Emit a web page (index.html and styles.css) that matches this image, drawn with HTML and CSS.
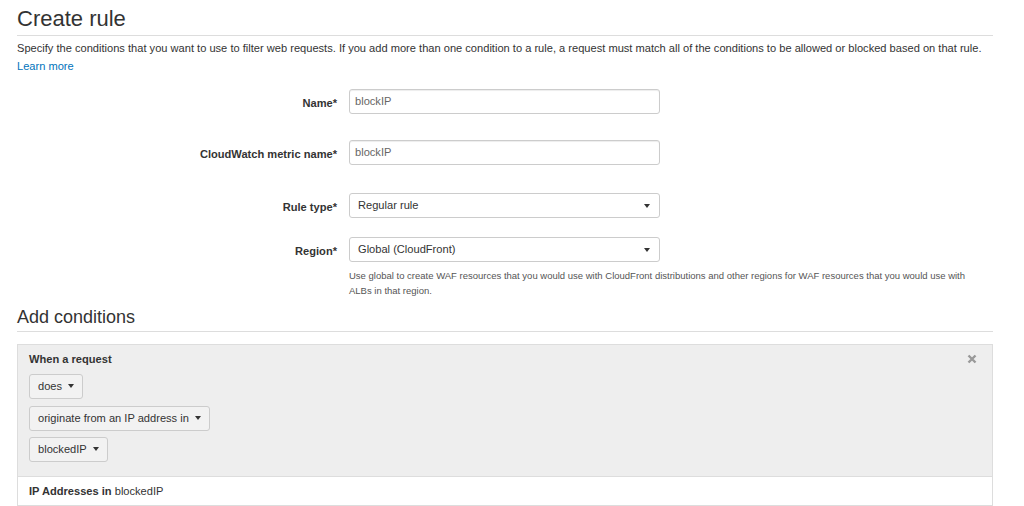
FILE: index.html
```html
<!DOCTYPE html>
<html>
<head>
<meta charset="utf-8">
<link rel="stylesheet" href="styles.css">
</head>
<body>
<div class="page">
  <h1 class="title">Create rule</h1>
  <p class="desc">Specify the conditions that you want to use to filter web requests. If you add more than one condition to a rule, a request must match all of the conditions to be allowed or blocked based on that rule.<br><a class="link" href="#">Learn more</a></p>

  <div class="form">
    <div class="row row-name">
      <label class="lbl">Name*</label>
      <div class="ctl"><div class="input">blockIP</div></div>
    </div>
    <div class="row row-cw">
      <label class="lbl">CloudWatch metric name*</label>
      <div class="ctl"><div class="input">blockIP</div></div>
    </div>
    <div class="row row-type">
      <label class="lbl">Rule type*</label>
      <div class="ctl"><div class="select">Regular rule<span class="caret"></span></div></div>
    </div>
    <div class="row row-region">
      <label class="lbl">Region*</label>
      <div class="ctl">
        <div class="select">Global (CloudFront)<span class="caret"></span></div>
        <p class="help">Use global to create WAF resources that you would use with CloudFront distributions and other regions for WAF resources that you would use with ALBs in that region.</p>
      </div>
    </div>
  </div>

  <h2 class="subtitle">Add conditions</h2>

  <div class="panel">
    <div class="panel-body">
      <div class="panel-head">
        <span class="when">When a request</span>
        <svg class="close" width="10" height="10" viewBox="0 0 10 10"><path d="M1.5 1.5 L8.5 8.5 M8.5 1.5 L1.5 8.5" stroke="#999" stroke-width="2.4" stroke-linecap="butt"/></svg>
      </div>
      <div class="btnrow"><span class="btn">does<span class="caret sm"></span></span></div>
      <div class="btnrow"><span class="btn">originate from an IP address in<span class="caret sm"></span></span></div>
      <div class="btnrow"><span class="btn">blockedIP<span class="caret sm"></span></span></div>
    </div>
    <div class="panel-foot"><b>IP Addresses in</b> blockedIP</div>
  </div>
</div>
</body>
</html>
```
FILE: styles.css
```css
* { box-sizing: border-box; }
html, body { margin: 0; padding: 0; background: #fff; }
body {
  font-family: "Liberation Sans", Arial, sans-serif;
  font-size: 11.1px;
  color: #333;
}
.page {
  padding: 0 31px 0 17px;
}
.title {
  margin: 0;
  padding-top: 6px;
  font-size: 22px;
  font-weight: normal;
  line-height: 26px;
  height: 36px;
  color: #333;
  border-bottom: 1px solid #ddd;
}
.desc {
  margin: 3px 0 0 0;
  line-height: 18px;
  font-size: 11.1px;
}
.link { color: #0073bb; text-decoration: none; }
.form { margin-top: 14px; }
.row {
  display: flex;
  align-items: flex-start;
}
.lbl {
  width: 320px;
  text-align: right;
  font-weight: bold;
  font-size: 11.1px;
  padding-top: 7px;
  line-height: 14px;
  flex: none;
}
.ctl {
  margin-left: 12px;
  width: 311px;
  flex: none;
}
.row-name { height: 51px; }
.row-cw { height: 53px; }
.row-type { height: 44px; }
.input, .select {
  height: 25px;
  border: 1px solid #ccc;
  border-radius: 3px;
  box-shadow: inset 0 1px 1px rgba(0,0,0,0.075);
  line-height: 23px;
  padding: 0 8px 0 5px;
  font-size: 11.1px;
  color: #666;
  background: #fff;
}
.select {
  position: relative;
  color: #333;
  padding-left: 8px;
  box-shadow: none;
}
.caret {
  position: absolute;
  right: 9px;
  top: 10px;
  width: 0; height: 0;
  border-left: 3.5px solid transparent;
  border-right: 3.5px solid transparent;
  border-top: 4px solid #333;
}
.caret.sm {
  position: static;
  display: inline-block;
  vertical-align: middle;
  margin-left: 6px;
  margin-top: -2px;
}
.help {
  margin: 6px 0 0 0;
  width: 640px;
  font-size: 9.5px;
  line-height: 15px;
  color: #555;
}
.subtitle {
  margin: 8px 0 0 0;
  font-size: 18px;
  font-weight: normal;
  line-height: 22px;
  height: 26px;
  color: #333;
  border-bottom: 1px solid #ddd;
}
.panel {
  margin-top: 12px;
  border: 1px solid #ddd;
}
.panel-body {
  background: #eee;
  padding: 7px 11px 14px 11px;
  border-bottom: 1px solid #ddd;
}
.panel-head {
  display: flex;
  justify-content: space-between;
  align-items: center;
  height: 14px;
  margin-bottom: 8px;
}
.when { font-weight: bold; font-size: 11.1px; }
.close { margin-right: 4px; }
.btnrow { height: 31.5px; }
.btnrow:last-child { height: 25px; }
.btn {
  display: inline-block;
  height: 25px;
  line-height: 23px;
  padding: 0 8px;
  border: 1px solid #ccc;
  border-radius: 3px;
  background: #f2f2f2;
  font-size: 11.1px;
  color: #333;
}
.panel-foot {
  height: 28px;
  line-height: 28px;
  padding-left: 11px;
  font-size: 11.1px;
  background: #fff;
}
```
